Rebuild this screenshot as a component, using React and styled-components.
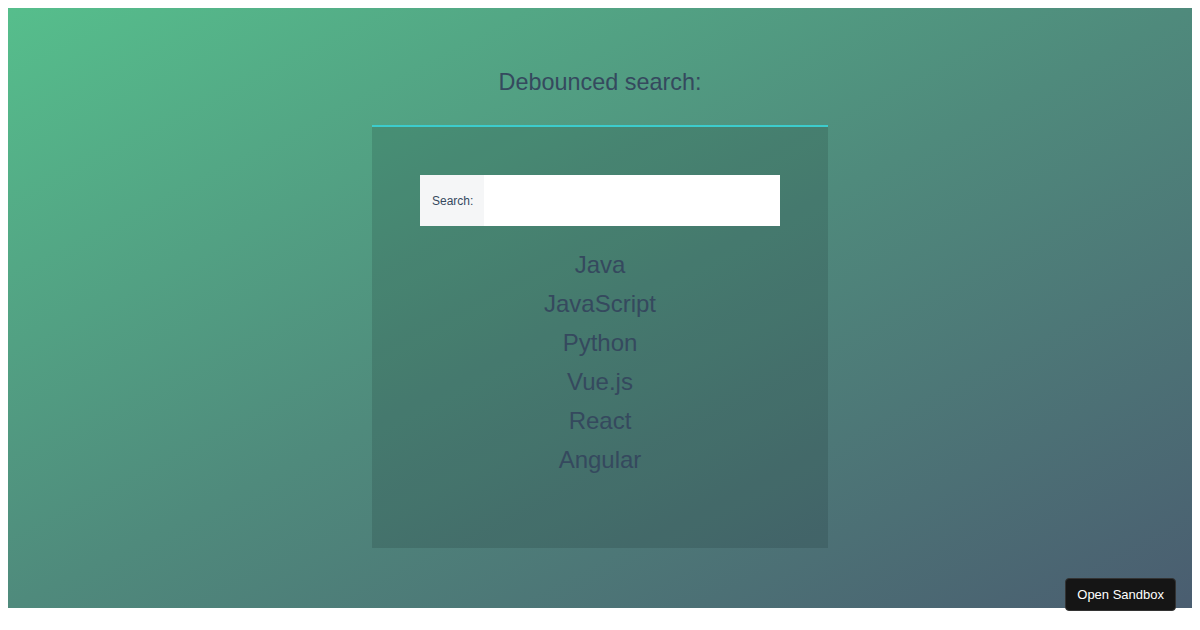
import React, { useState, useEffect } from "react";
import styled, { createGlobalStyle } from "styled-components";

const Global = createGlobalStyle`
  body {
    margin: 8px;
    background: #ffffff;
    font-family: "Liberation Sans", Arial, sans-serif;
  }
`;

const Page = styled.div`
  height: 600px;
  box-sizing: border-box;
  padding-top: 60px;
  background: linear-gradient(to bottom right, #56be8c 0%, #4f8a7c 50%, #4a5d70 100%);
  display: flex;
  flex-direction: column;
  align-items: center;
`;

const Title = styled.h2`
  margin: 0 0 29px;
  font-size: 23.4px;
  line-height: 28px;
  font-weight: 400;
  color: #35495e;
`;

const Panel = styled.div`
  width: 456px;
  box-sizing: border-box;
  padding: 48px;
  border-top: 2px solid #3ccccc;
  background: rgba(20, 40, 40, 0.16);
`;

const InputGroup = styled.label`
  display: flex;
  height: 51px;
  background: #ffffff;
`;

const Addon = styled.span`
  display: flex;
  align-items: center;
  padding: 0 12px;
  width: 64px;
  box-sizing: border-box;
  background: #f5f6f7;
  font-size: 12px;
  color: #35495e;
`;

const Input = styled.input`
  flex: 1;
  border: none;
  outline: none;
  padding: 0 12px;
  font-size: 16px;
  font-family: inherit;
  color: #35495e;
  background: #ffffff;
`;

const List = styled.ul`
  list-style: none;
  margin: 19px 0 21px;
  padding: 0;
  text-align: center;
`;

const Item = styled.li`
  font-size: 24px;
  line-height: 39px;
  color: #35495e;
`;

const SandboxButton = styled.a`
  position: fixed;
  right: 24px;
  bottom: 19px;
  height: 33px;
  padding: 0 11px;
  display: flex;
  align-items: center;
  box-sizing: border-box;
  background: #151515;
  color: #ffffff;
  font-size: 13px;
  border-radius: 4px;
  border: 1px solid #333;
  text-decoration: none;
  font-family: "Liberation Sans", Arial, sans-serif;
`;

const languages = ["Java", "JavaScript", "Python", "Vue.js", "React", "Angular"];

export default function App() {
  const [query, setQuery] = useState("");
  const [debounced, setDebounced] = useState("");
  useEffect(() => {
    const t = setTimeout(() => setDebounced(query), 300);
    return () => clearTimeout(t);
  }, [query]);
  const shown = languages.filter((l) =>
    l.toLowerCase().includes(debounced.toLowerCase())
  );
  return (
    <>
      <Global />
      <Page>
        <Title>Debounced search:</Title>
        <Panel>
          <InputGroup>
            <Addon>Search:</Addon>
            <Input value={query} onChange={(e) => setQuery(e.target.value)} />
          </InputGroup>
          <List>
            {shown.map((l) => (
              <Item key={l}>{l}</Item>
            ))}
          </List>
        </Panel>
      </Page>
      <SandboxButton href="#">Open Sandbox</SandboxButton>
    </>
  );
}
